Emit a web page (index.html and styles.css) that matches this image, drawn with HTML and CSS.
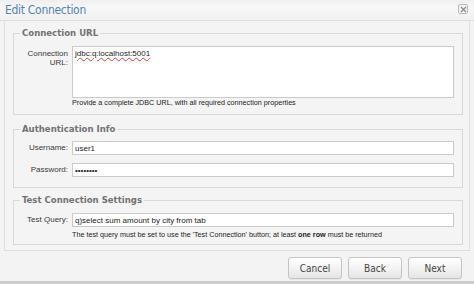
FILE: index.html
```html
<!DOCTYPE html>
<html>
<head>
<meta charset="utf-8">
<link rel="stylesheet" href="styles.css">
</head>
<body>
<div class="dialog">
  <div class="header">
    <span class="title">Edit Connection</span>
    <span class="close"><svg width="7" height="7" viewBox="0 0 7 7"><path d="M1 1L6 6M6 1L1 6" stroke="#8a8a8a" stroke-width="1.3" fill="none"/></svg></span>
  </div>
  <div class="panel">
    <fieldset class="group g1">
      <legend>Connection URL</legend>
      <div class="grid">
        <label class="lbl lbl-multi">Connection<br>URL:</label>
        <div class="textarea" role="textbox"><span class="spell">jdbc:q:localhost:5001</span></div>
        <div class="help">Provide a complete JDBC URL, with all required connection properties</div>
      </div>
    </fieldset>
    <fieldset class="group g2">
      <legend>Authentication Info</legend>
      <div class="grid rows">
        <label class="lbl">Username:</label>
        <input class="field" type="text" value="user1">
        <label class="lbl">Password:</label>
        <input class="field" type="password" value="password">
      </div>
    </fieldset>
    <fieldset class="group g3">
      <legend>Test Connection Settings</legend>
      <div class="grid">
        <label class="lbl">Test Query:</label>
        <input class="field" type="text" value="q)select sum amount by city from tab">
        <div class="help help3">The test query must be set to use the 'Test Connection' button; at least <b>one row</b> must be returned</div>
      </div>
    </fieldset>
  </div>
  <div class="footer">
    <button class="btn">Cancel</button>
    <button class="btn">Back</button>
    <button class="btn">Next</button>
  </div>
</div>
</body>
</html>
```
FILE: styles.css
```css
html, body {
  margin: 0;
  padding: 0;
}
body {
  width: 474px;
  height: 284px;
  overflow: hidden;
  background: #f3f3f3;
  font-family: "Liberation Sans", Arial, sans-serif;
  color: #333;
}
.dialog {
  height: 284px;
  box-sizing: border-box;
  display: flex;
  flex-direction: column;
  background: #f3f3f3;
  border-bottom: 3px solid #cccccc;
}
.header {
  height: 21px;
  flex: none;
  box-sizing: border-box;
  display: flex;
  justify-content: space-between;
  align-items: flex-start;
  padding: 0 6px 0 5px;
  background: linear-gradient(#f0f0f0, #f7f7f7 40%, #f1f1f1);
  border-bottom: 1px solid #dedede;
}
.title {
  font-family: "DejaVu Sans Condensed", "Liberation Sans", sans-serif;
  font-size: 12px;
  letter-spacing: -0.3px;
  line-height: 21px;
  color: #5282b0;
}
.close {
  margin-top: 4px;
  width: 8px;
  height: 8px;
  border: 1px solid #b9b9b9;
  border-radius: 2px;
  background: #f4f4f4;
  display: flex;
  align-items: center;
  justify-content: center;
}
.close svg { display: block; }
.panel {
  flex: none;
  margin: 0 4px;
  border: 1px solid #dedede;
  border-top: none;
  padding: 6px 6px 5px 8px;
  background: #f4f4f4;
}
.group {
  margin: 0;
  border: 1px solid #d8d8d8;
  padding: 7px 8px 6px 6px;
  min-width: 0;
}
.group legend {
  padding: 0 2px;
  font-family: "DejaVu Sans Condensed", "Liberation Sans", sans-serif;
  font-size: 9.5px;
  font-weight: bold;
  line-height: 12px;
  color: #727272;
}
.g2 {
  margin-top: 8px;
  padding-top: 6px;
  padding-bottom: 10px;
}
.g3 {
  margin-top: 6px;
  padding-top: 7px;
  padding-bottom: 4px;
}
.grid {
  display: grid;
  grid-template-columns: 48px 1fr;
  column-gap: 4px;
}
.grid.rows {
  row-gap: 8px;
}
.lbl {
  font-size: 8px;
  line-height: 14px;
  text-align: right;
  color: #3a3a3a;
}
.lbl-multi {
  line-height: 9px;
  padding-top: 3px;
}
.textarea {
  height: 52px;
  box-sizing: border-box;
  background: #fff;
  border: 1px solid #cbcbcb;
  padding: 2px 2px;
  font-size: 8px;
  line-height: 10px;
  color: #222;
}
.spell {
  text-decoration: underline wavy #e04040;
  text-decoration-thickness: 1px;
  text-underline-offset: 1px;
}
.field {
  height: 14px;
  box-sizing: border-box;
  margin: 0;
  border: 1px solid #cbcbcb;
  background: #fff;
  padding: 0 2px;
  font-family: "Liberation Sans", Arial, sans-serif;
  font-size: 8px;
  color: #222;
  outline: none;
}
.help {
  grid-column: 2;
  font-size: 7.2px;
  line-height: 10px;
  color: #222;
}
.help3 {
  margin-top: 3px;
}
.footer {
  flex: 1;
  display: flex;
  justify-content: flex-end;
  align-items: flex-start;
  gap: 6px;
  padding: 6px 12px 0 0;
}
.btn {
  width: 54px;
  height: 22px;
  margin: 0;
  padding: 0;
  border: 1px solid #c4c4c4;
  border-radius: 3px;
  background: linear-gradient(#ffffff, #f3f3f3 50%, #e4e4e4);
  font-family: "DejaVu Sans Condensed", "Liberation Sans", sans-serif;
  font-size: 10px;
  color: #444;
  box-shadow: 0 1px 0 rgba(0,0,0,0.05);
}
```
